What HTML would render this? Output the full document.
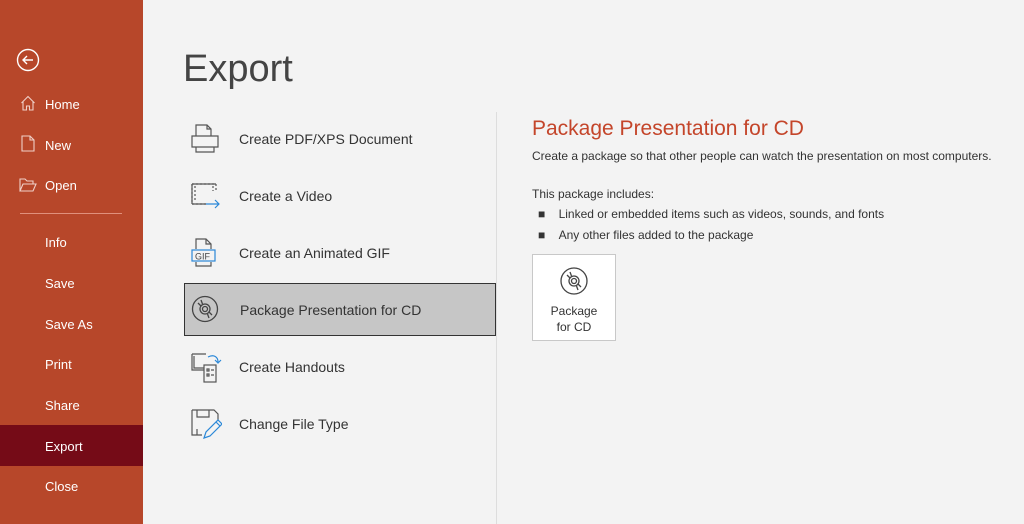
<!DOCTYPE html>
<html><head><meta charset="utf-8"><style>
*{margin:0;padding:0;box-sizing:border-box}
body{width:1024px;height:524px;background:#f3f3f3;font-family:"Liberation Sans",sans-serif;position:relative;overflow:hidden;color:#262626}
#side{position:absolute;left:0;top:0;width:143px;height:524px;background:#b7472a;color:#fff;font-size:13px}
#side .it{position:absolute;left:45px}
#side svg{position:absolute}
.sel{position:absolute;left:0;top:425px;width:143px;height:41px;background:#750b17}
h1{position:absolute;left:183px;top:48px;font-weight:normal;font-size:38px;color:#444}
.row{position:absolute;left:184px;width:312px;height:53px;font-size:14px;color:#333}
.row span{position:absolute;left:55px;top:19px}
.row svg{position:absolute;left:6px;top:11px}
.hl{background:#c6c6c6;border:1.5px solid #333}
.div{position:absolute;left:496px;top:112px;width:1px;height:412px;background:#ddd}
.r{position:absolute;left:532px;font-size:12px;color:#333}
</style></head><body>
<div id="side">
<svg style="left:16px;top:48px" width="24" height="24" viewBox="0 0 24 24" fill="none" stroke="#fff" stroke-width="1.4"><circle cx="12" cy="12" r="10.5"/><path d="M17 12H7M11 8l-4 4 4 4"/></svg>
<svg style="left:20px;top:95px" width="16" height="16" viewBox="0 0 16 16" fill="none" stroke="#f0d0c8" stroke-width="1.1"><path d="M1.5 8L8 1.5 14.5 8M3 6.5V15h3.5v-4h3v4H13V6.5"/></svg>
<div class="it" style="top:97px">Home</div>
<svg style="left:21px;top:135px" width="14" height="17" viewBox="0 0 14 17" fill="none" stroke="#f0d0c8" stroke-width="1.1"><path d="M1 1h8l4 4v11H1zM9 1v4h4"/></svg>
<div class="it" style="top:138px">New</div>
<svg style="left:19px;top:178px" width="18" height="14" viewBox="0 0 18 14" fill="none" stroke="#f0d0c8" stroke-width="1.1"><path d="M1 13V1h5l2 2h6v3M1 13l3-7h13l-3 7z"/></svg>
<div class="it" style="top:178px">Open</div>
<div style="position:absolute;left:20px;top:213px;width:102px;height:1px;background:#e0907c"></div>
<div class="it" style="top:235px">Info</div>
<div class="it" style="top:276px">Save</div>
<div class="it" style="top:317px">Save As</div>
<div class="it" style="top:357px">Print</div>
<div class="it" style="top:398px">Share</div>
<div class="sel"></div>
<div class="it" style="top:439px">Export</div>
<div class="it" style="top:479px">Close</div>
</div>
<h1>Export</h1>
<div class="row" style="top:112px"><svg width="30" height="32" viewBox="0 0 30 32" fill="none" stroke="#555" stroke-width="1.2"><path d="M6 13V2h11l4 4v7M17 2v4h4M2 13h26v11H2zM6 24v5h18v-5"/></svg><span>Create PDF/XPS Document</span></div>
<div class="row" style="top:169px"><svg width="32" height="32" viewBox="0 0 32 32" fill="none" stroke="#555" stroke-width="1.2"><path d="M2 4h24v8M2 4v20h14M5 6v16M23 6v5" stroke-dasharray="2 2"/><path d="M2 4h24M2 24h14M2 4v20" /><path d="M16 24h13M25 20l4 4-4 4" stroke="#2b88d8"/></svg><span>Create a Video</span></div>
<div class="row" style="top:226px"><svg width="32" height="32" viewBox="0 0 32 32" fill="none" stroke="#555" stroke-width="1.2"><path d="M6 12V2h10l5 5v5M16 2v5h5M6 25v4h15v-4"/><rect x="2" y="13" width="23" height="11" stroke="#2b88d8"/><text x="5" y="22.5" font-size="9" fill="#444" stroke="none" font-family="Liberation Sans">GIF</text></svg><span>Create an Animated GIF</span></div>
<div class="row hl" style="top:283px"><svg width="30" height="30" viewBox="0 0 30 30" fill="none" stroke="#444" stroke-width="1.3" style="left:5px;top:10px"><circle cx="15" cy="15" r="12.5"/><circle cx="15" cy="15" r="5"/><circle cx="15" cy="15" r="2.5"/><path d="M8 9l3 3M19 18l3 3M11 6l1.5 4M17.5 20l1.5 4"/></svg><span style="top:18px">Package Presentation for CD</span></div>
<div class="row" style="top:340px"><svg width="32" height="32" viewBox="0 0 32 32" fill="none" stroke="#555" stroke-width="1.2"><path d="M2 3h14M2 3v16h12M4 5v12h10"/><rect x="14" y="14" width="12" height="17"/><path d="M17 18h2v2h-2zM21 19h3M17 23h2v2h-2zM21 24h3"/><path d="M18 6c6-3 10 0 10 5M25 9l3 3 3-3" stroke="#2b88d8"/></svg><span>Create Handouts</span></div>
<div class="row" style="top:397px"><svg width="32" height="32" viewBox="0 0 32 32" fill="none" stroke="#555" stroke-width="1.2"><path d="M2 2h22l4 4v6M2 2v25h10M7 2v7h12V2M7 27v-6"/><path d="M14 30l2-6 12-12 4 4-12 12zM26 14l4 4" stroke="#2b88d8"/></svg><span>Change File Type</span></div>
<div class="div"></div>
<div class="r" style="top:117px;font-size:21px;color:#c4452a">Package Presentation for CD</div>
<div class="r" style="top:149px">Create a package so that other people can watch the presentation on most computers.</div>
<div class="r" style="top:187px">This package includes:</div>
<div class="r" style="top:207px;left:538px">■&nbsp;&nbsp;&nbsp;&nbsp;Linked or embedded items such as videos, sounds, and fonts</div>
<div class="r" style="top:228px;left:538px">■&nbsp;&nbsp;&nbsp;&nbsp;Any other files added to the package</div>
<div style="position:absolute;left:532px;top:254px;width:84px;height:87px;background:#fff;border:1px solid #c8c8c8;text-align:center;font-size:12px;color:#333">
<svg style="margin-top:11px" width="30" height="30" viewBox="0 0 30 30" fill="none" stroke="#444" stroke-width="1.3"><circle cx="15" cy="15" r="13"/><circle cx="15" cy="15" r="5"/><circle cx="15" cy="15" r="2.5"/><path d="M8 9l3 3M19 18l3 3M11 6l1.5 4M17.5 20l1.5 4"/></svg>
<div style="margin-top:4px;line-height:16px">Package<br>for CD</div></div>
</body></html>
